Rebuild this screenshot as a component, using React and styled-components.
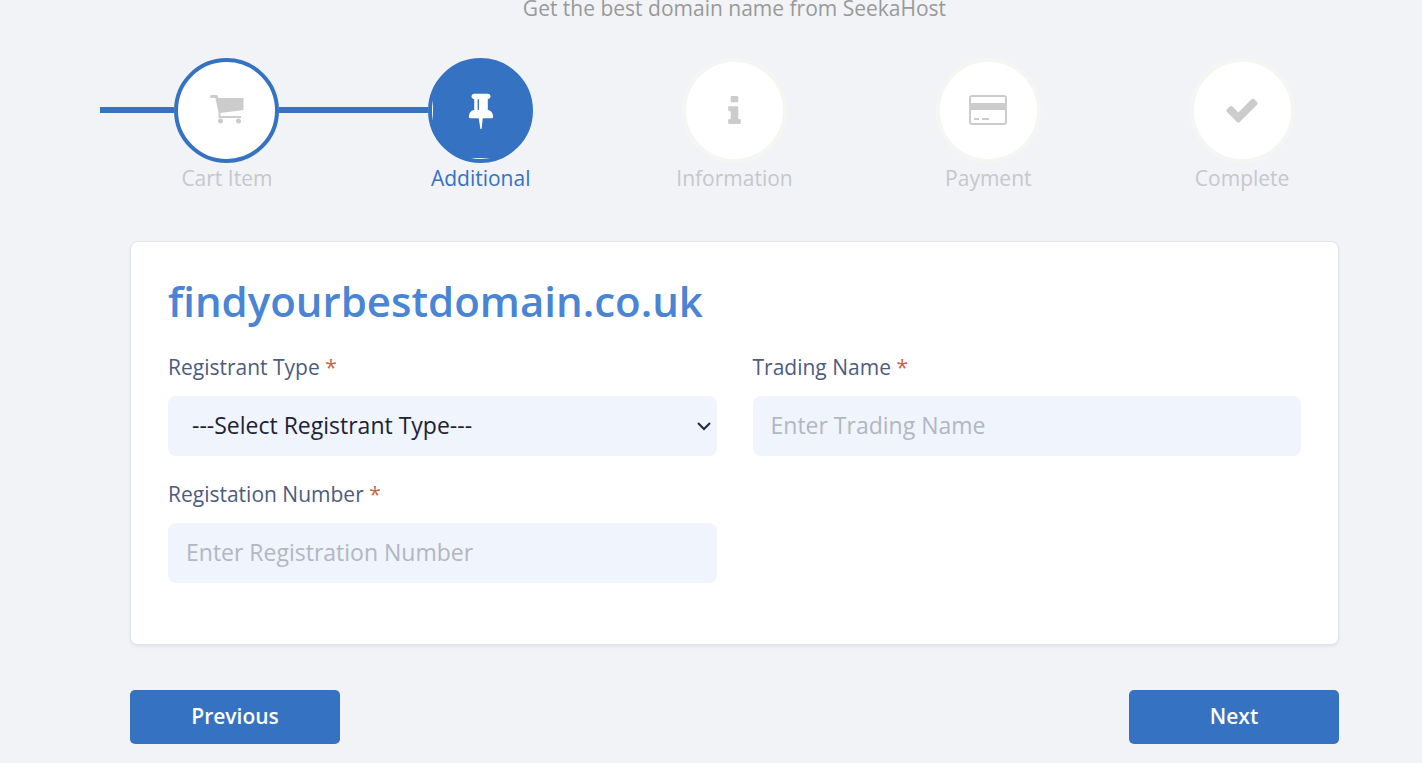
import React from "react";
import styled, { createGlobalStyle } from "styled-components";

const GlobalStyle = createGlobalStyle`
  * {
    box-sizing: border-box;
  }

  body {
    margin: 0;
    background: #f1f3f7;
    font-family: "Open Sans", "Noto Sans", sans-serif;
    font-size: 21px;
  }
`;

const Page = styled.main`
  padding: 0 53px 19px 100px;
`;

const Tagline = styled.p`
  margin: 0;
  line-height: 16px;
  text-align: center;
  color: #999;
`;

const Steps = styled.ol`
  display: grid;
  grid-template-columns: repeat(5, 1fr);
  margin: 42px 0 0;
  padding: 0;
  list-style: none;
`;

const Step = styled.li`
  display: flex;
  flex-direction: column;
  align-items: center;
`;

const StepTrack = styled.div`
  display: flex;
  align-items: center;
  width: 100%;
`;

const StepLine = styled.span`
  flex: 1;
  height: 6px;
  margin-bottom: 2px;
  background: ${props => (props.$filled ? "#3572c2" : "transparent")};
`;

const StepCircle = styled.span`
  display: flex;
  align-items: center;
  justify-content: center;
  width: 105px;
  height: 105px;
  padding-bottom: 1px;
  border: 4px solid ${props => (props.$reached ? "#3572c2" : "#f5f5f1")};
  border-radius: 50%;
  background-color: #fff;
  color: ${props => (props.$active ? "#fff" : "#ccc")};

  /* leaves a thin white edge at the left and the bottom */
  ${props =>
    props.$active &&
    `
    background-image: linear-gradient(#3572c2, #3572c2);
    background-position: top right;
    background-repeat: no-repeat;
    background-size: calc(100% - 1px) calc(100% - 1px);
  `}
`;

const StepLabel = styled.span`
  line-height: 30px;
  color: ${props => (props.$active ? "#3572c2" : "#c6c7cc")};
`;

const Content = styled.form`
  margin: 48px 30px 0;
`;

const Card = styled.section`
  padding: 29px 37px 61px;
  border: 1px solid #e1e5eb;
  border-radius: 8px;
  background: #fff;
  box-shadow: 0 2px 3px rgba(60, 70, 90, 0.08);
`;

const DomainName = styled.h2`
  margin: 0 0 21px;
  line-height: 60px;
  font-size: 42px;
  font-weight: 600;
  color: #4a84d4;
`;

const Fields = styled.div`
  display: grid;
  grid-template-columns: 1fr 1fr;
  gap: 23px 36px;
`;

const Field = styled.div`
  display: flex;
  flex-direction: column;
  gap: 14px;
`;

const Label = styled.label`
  line-height: 30px;
  color: #4c5c7e;
`;

const Required = styled.span`
  color: #c0694a;
`;

const TextInput = styled.input`
  width: 100%;
  height: 60px;
  padding: 0 18px 2px;
  border: 0;
  border-radius: 8px;
  background: #eff4fd;
  font: inherit;
  font-size: 23px;
  color: #1e2235;

  &::placeholder {
    color: #b1b7c3;
    opacity: 1;
  }
`;

const SelectWrapper = styled.div`
  position: relative;
  display: flex;

  & svg {
    position: absolute;
    top: 22px;
    right: 4px;
    pointer-events: none;
  }
`;

const Select = styled(TextInput)`
  padding: 0 24px 2px;
  appearance: none;
`;

const Actions = styled.div`
  display: flex;
  justify-content: space-between;
  margin-top: 45px;
`;

const Button = styled.button`
  width: 210px;
  height: 54px;
  padding: 0 0 2px;
  border: 0;
  border-radius: 5px;
  background: #3572c2;
  font: inherit;
  font-weight: 600;
  color: #fff;
  cursor: pointer;
`;

const CartIcon = () => (
  <svg width="34" height="30" viewBox="0 0 34 30" fill="currentColor" aria-hidden="true">
    <path d="M1.500 0h5a1.400 1.400 0 0 1 1.300 1L8.400 3H33.500v12L10.500 18v3H31v2H8.500V17L5.400 3H1.500a1.500 1.500 0 0 1 0-3z" />
    <circle cx="10.500" cy="26" r="2.500" />
    <circle cx="28.500" cy="26" r="2.500" />
  </svg>
);

const PinIcon = () => (
  <svg width="38" height="38" viewBox="0 0 1792 1792" fill="currentColor" aria-hidden="true">
    <path d="M800 864v-448q0-14-9-23t-23-9-23 9-9 23v448q0 14 9 23t23 9 23-9 9-23zm672 352q0 26-19 45t-45 19h-429l-51 483q-2 12-10.500 20.500t-20.500 8.500h-1q-27 0-32-27l-76-485h-404q-26 0-45-19t-19-45q0-123 78.500-221.500t177.500-98.500v-512q-52 0-90-38t-38-90 38-90 90-38h640q52 0 90 38t38 90-38 90-90 38v512q99 0 177.500 98.500t78.500 221.500z" />
  </svg>
);

const InfoIcon = () => (
  <svg width="13" height="28" viewBox="0 128 640 1408" fill="currentColor" aria-hidden="true">
    <path d="M640 1344v128q0 26-19 45t-45 19h-512q-26 0-45-19t-19-45v-128q0-26 19-45t45-19h64v-384h-64q-26 0-45-19t-19-45v-128q0-26 19-45t45-19h384q26 0 45 19t19 45v576h64q26 0 45 19t19 45zm-128-1152v192q0 26-19 45t-45 19h-256q-26 0-45-19t-19-45v-192q0-26 19-45t45-19h256q26 0 45 19t19 45z" />
  </svg>
);

const CardIcon = () => (
  <svg width="38" height="30" viewBox="0 0 38 30" aria-hidden="true">
    <rect x="1" y="1" width="36" height="28" rx="2" fill="none" stroke="currentColor" strokeWidth="2" />
    <path d="M1 8h36v7H1zM5 23h5v2H5zM13 23h7v2h-7z" fill="currentColor" />
  </svg>
);

const CheckIcon = () => (
  <svg width="36" height="36" viewBox="0 0 1792 1792" fill="currentColor" aria-hidden="true">
    <path d="M1671 566q0 40-28 68l-724 724-136 136q-28 28-68 28t-68-28l-136-136-362-362q-28-28-28-68t28-68l136-136q28-28 68-28t68 28l294 295 656-657q28-28 68-28t68 28l136 136q28 28 28 68z" />
  </svg>
);

const ChevronIcon = () => (
  <svg width="18" height="18" viewBox="0 0 18 18" fill="none" stroke="#1e2a4a" strokeWidth="2" aria-hidden="true">
    <path d="M3 5l6 6 6-6" />
  </svg>
);

const steps = [
  { label: "Cart Item", Icon: CartIcon },
  { label: "Additional", Icon: PinIcon },
  { label: "Information", Icon: InfoIcon },
  { label: "Payment", Icon: CardIcon },
  { label: "Complete", Icon: CheckIcon }
];

class App extends React.Component {
  state = {
    activeStep: 1
  };

  goToStep = offset => {
    this.setState(({ activeStep }) => ({
      activeStep: Math.min(Math.max(activeStep + offset, 0), steps.length - 1)
    }));
  };

  renderSteps = () => {
    const { activeStep } = this.state;
    return (
      <Steps>
        {steps.map(({ label, Icon }, index) => {
          const isActive = index === activeStep;
          return (
            <Step key={label} aria-current={isActive ? "step" : undefined}>
              <StepTrack>
                <StepLine $filled={index <= activeStep} />
                <StepCircle $reached={index <= activeStep} $active={isActive}>
                  <Icon />
                </StepCircle>
                <StepLine $filled={index < activeStep} />
              </StepTrack>
              <StepLabel $active={isActive}>{label}</StepLabel>
            </Step>
          );
        })}
      </Steps>
    );
  };

  render() {
    return (
      <Page>
        <GlobalStyle />
        <Tagline>Get the best domain name from SeekaHost</Tagline>
        {this.renderSteps()}
        <Content onSubmit={event => event.preventDefault()}>
          <Card>
            <DomainName>findyourbestdomain.co.uk</DomainName>
            <Fields>
              <Field>
                <Label htmlFor="registrant-type">
                  Registrant Type <Required>*</Required>
                </Label>
                <SelectWrapper>
                  <Select as="select" id="registrant-type">
                    <option>---Select Registrant Type---</option>
                  </Select>
                  <ChevronIcon />
                </SelectWrapper>
              </Field>
              <Field>
                <Label htmlFor="trading-name">
                  Trading Name <Required>*</Required>
                </Label>
                <TextInput id="trading-name" placeholder="Enter Trading Name" />
              </Field>
              <Field>
                <Label htmlFor="registration-number">
                  Registation Number <Required>*</Required>
                </Label>
                <TextInput id="registration-number" placeholder="Enter Registration Number" />
              </Field>
            </Fields>
          </Card>
          <Actions>
            <Button type="button" onClick={() => this.goToStep(-1)}>
              Previous
            </Button>
            <Button type="button" onClick={() => this.goToStep(1)}>
              Next
            </Button>
          </Actions>
        </Content>
      </Page>
    );
  }
}

export default App;
